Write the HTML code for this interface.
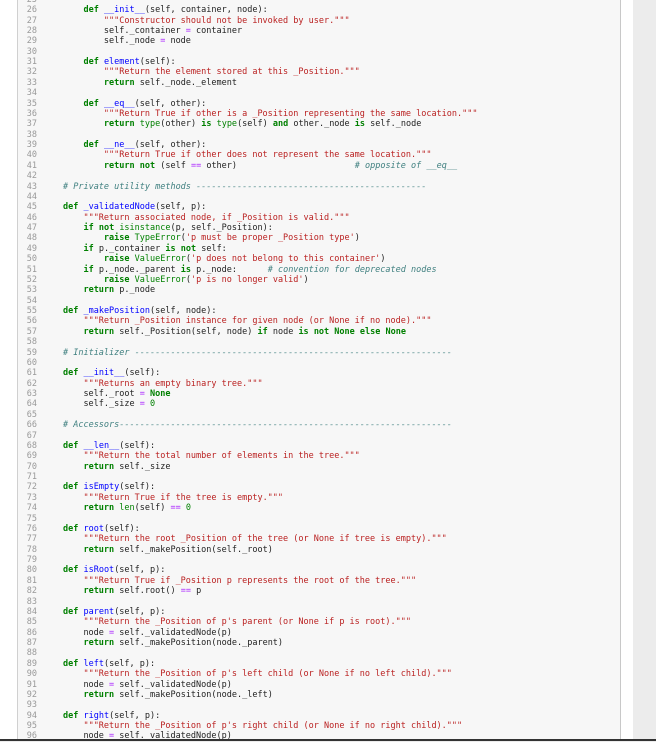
<!DOCTYPE html>
<html><head><meta charset="utf-8"><style>
html,body{margin:0;padding:0;width:656px;height:741px;overflow:hidden;background:#ececec;}
#wrap{position:absolute;left:0;top:0;width:633px;height:739px;background:#fff;}
#code{position:absolute;left:17px;top:0;width:602px;height:739px;background:#f7f7f7;border-left:1px solid #d0d0d0;border-right:1px solid #c8c8c8;}
#bot{position:absolute;left:0;top:739px;width:656px;height:2px;background:#333;}
pre{margin:0;font-family:"DejaVu Sans Mono","Liberation Mono",monospace;font-size:8.5px;line-height:10.38px;color:#222;position:absolute;top:-5.2px;white-space:pre;}
#nums{left:0;width:37px;text-align:right;color:#999;}
#src{left:42.5px;}
.k{color:#008000;font-weight:bold}.f{color:#0000ff}.s{color:#ba2121}.c{color:#408080;font-style:italic}.o{color:#aa22ff}.b{color:#008000}.n{color:#008000}
</style></head><body>
<div id="wrap"><div id="code"></div>
<pre id="nums">25
26
27
28
29
30
31
32
33
34
35
36
37
38
39
40
41
42
43
44
45
46
47
48
49
50
51
52
53
54
55
56
57
58
59
60
61
62
63
64
65
66
67
68
69
70
71
72
73
74
75
76
77
78
79
80
81
82
83
84
85
86
87
88
89
90
91
92
93
94
95
96</pre>
<pre id="src">

        <span class="k">def</span> <span class="f">__init__</span>(self, container, node):
            <span class="s">"""Constructor should not be invoked by user."""</span>
            self._container <span class="o">=</span> container
            self._node <span class="o">=</span> node

        <span class="k">def</span> <span class="f">element</span>(self):
            <span class="s">"""Return the element stored at this _Position."""</span>
            <span class="k">return</span> self._node._element

        <span class="k">def</span> <span class="f">__eq__</span>(self, other):
            <span class="s">"""Return True if other is a _Position representing the same location."""</span>
            <span class="k">return</span> <span class="b">type</span>(other) <span class="k">is</span> <span class="b">type</span>(self) <span class="k">and</span> other._node <span class="k">is</span> self._node

        <span class="k">def</span> <span class="f">__ne__</span>(self, other):
            <span class="s">"""Return True if other does not represent the same location."""</span>
            <span class="k">return</span> <span class="k">not</span> (self <span class="o">==</span> other)                       <span class="c"># opposite of __eq__</span>

    <span class="c"># Private utility methods ---------------------------------------------</span>

    <span class="k">def</span> <span class="f">_validatedNode</span>(self, p):
        <span class="s">"""Return associated node, if _Position is valid."""</span>
        <span class="k">if</span> <span class="k">not</span> <span class="b">isinstance</span>(p, self._Position):
            <span class="k">raise</span> <span class="b">TypeError</span>(<span class="s">'p must be proper _Position type'</span>)
        <span class="k">if</span> p._container <span class="k">is</span> <span class="k">not</span> self:
            <span class="k">raise</span> <span class="b">ValueError</span>(<span class="s">'p does not belong to this container'</span>)
        <span class="k">if</span> p._node._parent <span class="k">is</span> p._node:      <span class="c"># convention for deprecated nodes</span>
            <span class="k">raise</span> <span class="b">ValueError</span>(<span class="s">'p is no longer valid'</span>)
        <span class="k">return</span> p._node

    <span class="k">def</span> <span class="f">_makePosition</span>(self, node):
        <span class="s">"""Return _Position instance for given node (or None if no node)."""</span>
        <span class="k">return</span> self._Position(self, node) <span class="k">if</span> node <span class="k">is</span> <span class="k">not</span> <span class="k">None</span> <span class="k">else</span> <span class="k">None</span>

    <span class="c"># Initializer --------------------------------------------------------------</span>

    <span class="k">def</span> <span class="f">__init__</span>(self):
        <span class="s">"""Returns an empty binary tree."""</span>
        self._root <span class="o">=</span> <span class="k">None</span>
        self._size <span class="o">=</span> <span class="n">0</span>

    <span class="c"># Accessors-----------------------------------------------------------------</span>

    <span class="k">def</span> <span class="f">__len__</span>(self):
        <span class="s">"""Return the total number of elements in the tree."""</span>
        <span class="k">return</span> self._size

    <span class="k">def</span> <span class="f">isEmpty</span>(self):
        <span class="s">"""Return True if the tree is empty."""</span>
        <span class="k">return</span> <span class="b">len</span>(self) <span class="o">==</span> <span class="n">0</span>

    <span class="k">def</span> <span class="f">root</span>(self):
        <span class="s">"""Return the root _Position of the tree (or None if tree is empty)."""</span>
        <span class="k">return</span> self._makePosition(self._root)

    <span class="k">def</span> <span class="f">isRoot</span>(self, p):
        <span class="s">"""Return True if _Position p represents the root of the tree."""</span>
        <span class="k">return</span> self.root() <span class="o">==</span> p

    <span class="k">def</span> <span class="f">parent</span>(self, p):
        <span class="s">"""Return the _Position of p's parent (or None if p is root)."""</span>
        node <span class="o">=</span> self._validatedNode(p)
        <span class="k">return</span> self._makePosition(node._parent)

    <span class="k">def</span> <span class="f">left</span>(self, p):
        <span class="s">"""Return the _Position of p's left child (or None if no left child)."""</span>
        node <span class="o">=</span> self._validatedNode(p)
        <span class="k">return</span> self._makePosition(node._left)

    <span class="k">def</span> <span class="f">right</span>(self, p):
        <span class="s">"""Return the _Position of p's right child (or None if no right child)."""</span>
        node <span class="o">=</span> self._validatedNode(p)</pre>
</div>
<div id="bot"></div>
</body></html>
